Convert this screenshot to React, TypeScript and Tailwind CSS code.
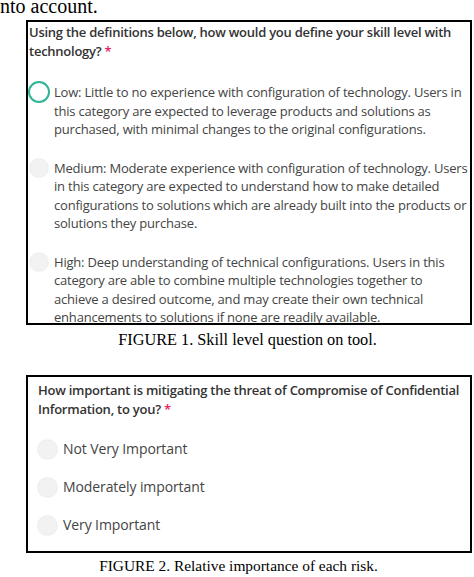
const skillLevels = [
  {
    label:
      "Low: Little to no experience with configuration of technology. Users in this category are expected to leverage products and solutions as purchased, with minimal changes to the original configurations.",
    selected: true,
  },
  {
    label:
      "Medium: Moderate experience with configuration of technology. Users in this category are expected to understand how to make detailed configurations to solutions which are already built into the products or solutions they purchase.",
    selected: false,
  },
  {
    label:
      "High: Deep understanding of technical configurations. Users in this category are able to combine multiple technologies together to achieve a desired outcome, and may create their own technical enhancements to solutions if none are readily available.",
    selected: false,
  },
];

const importance = ["Not Very Important", "Moderately important", "Very Important"];

function Radio({ selected, size }: { selected: boolean; size: "lg" | "sm" }) {
  if (selected) {
    return <span className="block w-[22px] h-[22px] rounded-full border-2 border-[#2fb596] bg-white shrink-0" />;
  }
  return (
    <span
      className={
        size === "lg"
          ? "block w-[18px] h-[18px] mx-[2px] rounded-full bg-[#f2f2f2] shadow-[0_0_2px_rgba(0,0,0,0.18)] shrink-0"
          : "block w-[19px] h-[19px] rounded-full bg-[#f2f2f2] shadow-[0_0_2px_rgba(0,0,0,0.18)] shrink-0"
      }
    />
  );
}

export default function App() {
  return (
    <div className="w-[474px] h-[577px] bg-white overflow-hidden">
      <div className="h-[20px] overflow-hidden">
        <p className="font-['Liberation_Serif',serif] text-[20px] leading-[20px] -mt-[4px] text-black">nto account.</p>
      </div>

      <div className="ml-[26px] w-[446px] h-[305px] border-2 border-black font-['Open_Sans',sans-serif] text-[13px] leading-[18.5px] overflow-hidden">
        <p className="pl-[1px] pt-[1px] font-semibold text-[#333] tracking-[-0.25px]">
          Using the definitions below, how would you define your skill level with technology?{" "}
          <span className="text-[#e4225c]">*</span>
        </p>
        <div className="mt-[23px] flex flex-col gap-[20px] pr-[2px]">
          {skillLevels.map((s) => (
            <div key={s.label} className="flex items-start gap-[4px]">
              <div className={s.selected ? "mt-[-2px]" : "mt-[0px]"}>
                <Radio selected={s.selected} size="lg" />
              </div>
              <p className="text-[#444] text-[13px] tracking-[-0.2px]">{s.label}</p>
            </div>
          ))}
        </div>
      </div>

      <p className="mt-[5px] text-center pl-[21px] font-['Liberation_Serif',serif] text-[16.3px] leading-[20px] text-black">
        FIGURE 1. Skill level question on tool.
      </p>

      <div className="mt-[25px] ml-[26px] w-[446px] h-[178px] border-2 border-black font-['Open_Sans',sans-serif] text-[13px] leading-[18.5px]">
        <p className="pl-[10px] pt-[4px] font-semibold text-[#333] tracking-[-0.25px]">
          How important is mitigating the threat of Compromise of Confidential Information, to you?{" "}
          <span className="text-[#e4225c]">*</span>
        </p>
        <div className="mt-[22px] flex flex-col gap-[19px] pl-[10px]">
          {importance.map((label) => (
            <div key={label} className="flex items-center gap-[6px] h-[19px]">
              <Radio selected={false} size="sm" />
              <span className="text-[#444] text-[14px] tracking-[-0.1px]">{label}</span>
            </div>
          ))}
        </div>
      </div>

      <p className="mt-[3px] text-center pl-[3px] font-['Liberation_Serif',serif] text-[15.4px] leading-[20px] text-black">
        FIGURE 2. Relative importance of each risk.
      </p>
    </div>
  );
}
